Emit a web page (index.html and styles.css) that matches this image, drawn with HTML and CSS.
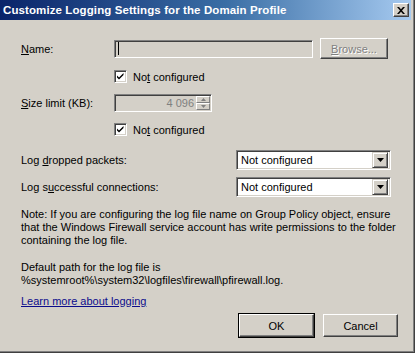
FILE: index.html
```html
<!DOCTYPE html>
<html lang="en">
<head>
  <meta charset="UTF-8" />
  <title>Customize Logging Settings for the Domain Profile</title>
  <link rel="stylesheet" href="styles.css">
</head>
<body>
  <div class="window">
    <div class="titlebar">
      <span class="title">Customize Logging Settings for the Domain Profile</span>
      <span class="close">
        <svg width="8" height="7" viewBox="0 0 8 7"><path d="M0 0h2l2 2.2L6 0h2L5 3.5 8 7H6L4 4.8 2 7H0l3-3.5z" fill="#000"/></svg>
      </span>
    </div>

    <div class="content">
      <div class="row row-name">
        <span class="label"><u>N</u>ame:</span>
        <span class="field field-name"><span class="caret"></span></span>
        <button class="btn btn-browse" disabled><u>B</u>rowse...</button>
      </div>

      <div class="check-row">
        <span class="checkbox">
          <svg width="9" height="9" viewBox="0 0 9 9"><path d="M1 3.5l2 2 4.5-4.5v2L3 7.5l-2-2z" fill="#000"/></svg>
        </span>
        <span>No<u>t</u> configured</span>
      </div>

      <div class="row row-size">
        <span class="label"><u>S</u>ize limit (KB):</span>
        <span class="field field-spin">
          <span class="spin-value">4 096</span>
          <span class="spin">
            <span class="spin-btn"><svg width="5" height="3" viewBox="0 0 5 3"><path d="M2.5 0L5 3H0z" fill="#808080"/></svg></span>
            <span class="spin-btn"><svg width="5" height="3" viewBox="0 0 5 3"><path d="M0 0h5L2.5 3z" fill="#808080"/></svg></span>
          </span>
        </span>
      </div>

      <div class="check-row">
        <span class="checkbox">
          <svg width="9" height="9" viewBox="0 0 9 9"><path d="M1 3.5l2 2 4.5-4.5v2L3 7.5l-2-2z" fill="#000"/></svg>
        </span>
        <span>No<u>t</u> configured</span>
      </div>

      <div class="row row-select first">
        <span class="label label-wide">Log <u>d</u>ropped packets:</span>
        <span class="select">
          <span class="select-text">Not configured</span>
          <span class="drop-btn"><svg width="7" height="4" viewBox="0 0 7 4"><path d="M0 0h7L3.5 4z" fill="#000"/></svg></span>
        </span>
      </div>

      <div class="row row-select">
        <span class="label label-wide">Log s<u>u</u>ccessful connections:</span>
        <span class="select">
          <span class="select-text">Not configured</span>
          <span class="drop-btn"><svg width="7" height="4" viewBox="0 0 7 4"><path d="M0 0h7L3.5 4z" fill="#000"/></svg></span>
        </span>
      </div>

      <p class="note">Note: If you are configuring the log file name on Group Policy object, ensure that the Windows Firewall service account has write permissions to the folder containing the log file.</p>

      <p class="note path">Default path for the log file is<br>%systemroot%\system32\logfiles\firewall\pfirewall.log.</p>

      <a class="link" href="#">Learn more about logging</a>

      <div class="actions">
        <button class="btn btn-default">OK</button>
        <button class="btn">Cancel</button>
      </div>
    </div>
  </div>
</body>
</html>
```

FILE: styles.css
```css
:root {
  --face: #d4d0c8;
  --light: #ffffff;
  --shadow: #808080;
  --dark: #404040;
  --text: #000000;
  --disabled: #808080;
  --link: #0c0c8c;
}

* {
  box-sizing: border-box;
}

body {
  margin: 0;
  background: var(--face);
  font-family: "Liberation Sans", Arial, sans-serif;
  font-size: 11px;
  color: var(--text);
}

u {
  text-decoration: underline;
  text-underline-offset: 1px;
}

.window {
  width: 415px;
  height: 353px;
  background: var(--face);
  border-right: 1px solid var(--dark);
  border-bottom: 1px solid var(--dark);
  box-shadow: inset -1px -1px 0 var(--shadow), inset -3px -3px 0 var(--face);
  padding-right: 3px;
  padding-bottom: 3px;
}

/* title bar */
.titlebar {
  height: 20px;
  background: linear-gradient(90deg, #0a246a 0%, #3a6ea5 55%, #a6caf0 100%);
  display: flex;
  align-items: center;
  justify-content: space-between;
  padding: 0 2px 0 3px;
}
.title {
  color: #fff;
  font-weight: bold;
  font-size: 11.5px;
  letter-spacing: 0.1px;
}
.close {
  width: 16px;
  height: 14px;
  background: var(--face);
  border: 1px solid;
  border-color: var(--light) var(--dark) var(--dark) var(--light);
  box-shadow: inset -1px -1px 0 var(--shadow);
  display: flex;
  align-items: center;
  justify-content: center;
}

/* body */
.content {
  padding: 18px 0 0 21px;
}

.row {
  display: flex;
  align-items: center;
}
.label {
  width: 93px;
  flex: none;
}
.label-wide {
  width: 215px;
}

.field {
  height: 18px;
  border: 1px solid;
  border-color: var(--shadow) var(--light) var(--light) var(--shadow);
  box-shadow: inset 1px 1px 0 var(--dark), inset -1px -1px 0 var(--face);
  display: flex;
  align-items: center;
}

.row-name {
  height: 21px;
}
.field-name {
  width: 199px;
  padding-left: 3px;
}
.caret {
  width: 1px;
  height: 13px;
  background: #000;
}

.btn {
  font: inherit;
  color: var(--text);
  background: var(--face);
  width: 75px;
  height: 23px;
  padding: 0;
  border: 1px solid;
  border-color: var(--light) var(--dark) var(--dark) var(--light);
  box-shadow: inset -1px -1px 0 var(--shadow);
}
.btn-browse {
  width: 68px;
  height: 21px;
  margin-left: 7px;
  color: var(--disabled);
  text-shadow: 1px 1px 0 var(--light);
}
.btn-default {
  outline: 1px solid #000;
  outline-offset: 0;
}

.check-row {
  display: flex;
  align-items: center;
  gap: 6px;
  height: 13px;
  margin: 11px 0 0 93px;
}
.checkbox {
  width: 13px;
  height: 13px;
  background: #fff;
  border: 1px solid;
  border-color: var(--shadow) var(--light) var(--light) var(--shadow);
  box-shadow: inset 1px 1px 0 var(--dark), inset -1px -1px 0 var(--face);
  display: flex;
  align-items: center;
  justify-content: center;
}

.row-size {
  height: 18px;
  margin-top: 11px;
}
.field-spin {
  width: 98px;
  justify-content: flex-end;
  padding-right: 1px;
}
.spin-value {
  color: var(--disabled);
  margin-right: 2px;
}
.spin {
  display: flex;
  flex-direction: column;
  width: 14px;
  height: 14px;
}
.spin-btn {
  flex: 1;
  background: var(--face);
  border: 1px solid;
  border-color: var(--light) var(--shadow) var(--shadow) var(--light);
  display: flex;
  align-items: center;
  justify-content: center;
}

.row-select {
  height: 20px;
  margin-top: 7px;
}
.row-select.first {
  margin-top: 14px;
}
.select {
  width: 155px;
  height: 20px;
  background: #fff;
  border: 1px solid;
  border-color: var(--shadow) var(--light) var(--light) var(--shadow);
  box-shadow: inset 1px 1px 0 var(--dark), inset -1px -1px 0 var(--face);
  display: flex;
  align-items: center;
  padding: 2px;
}
.select-text {
  flex: 1;
  padding-left: 2px;
}
.drop-btn {
  width: 16px;
  height: 16px;
  background: var(--face);
  border: 1px solid;
  border-color: var(--face) var(--dark) var(--dark) var(--face);
  box-shadow: inset 1px 1px 0 var(--light), inset -1px -1px 0 var(--shadow);
  display: flex;
  align-items: center;
  justify-content: center;
}

.note {
  margin: 11px 0 0;
  width: 386px;
  line-height: 13px;
}
.note.path {
  margin-top: 14px;
}

.link {
  display: inline-block;
  margin-top: 8px;
  color: var(--link);
  text-decoration: underline;
}

.actions {
  display: flex;
  gap: 9px;
  margin: 7px 0 0 218px;
}
```
